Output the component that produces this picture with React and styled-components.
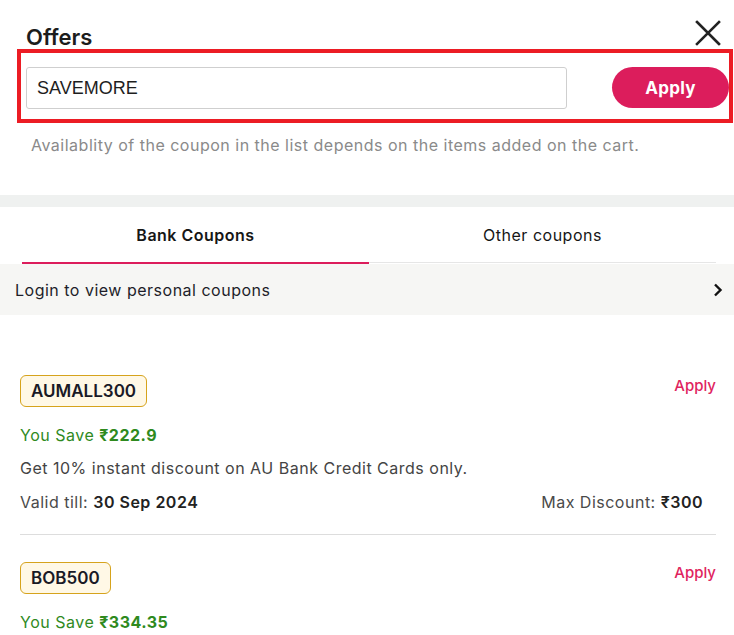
import styled, { createGlobalStyle } from 'styled-components';

const GlobalStyle = createGlobalStyle`
    body {
        margin: 0;
        background: #ffffff;
        font-family: Inter, "Noto Sans", sans-serif;
        color: #222222;
    }
`;

// only the part of each coupon that shows in the panel
const coupons = [
    {
        code: 'AUMALL300',
        save: '₹222.9',
        text: 'Get 10% instant discount on AU Bank Credit Cards only.',
        valid: '30 Sep 2024',
        max: '₹300',
    },
    {
        code: 'BOB500',
        save: '₹334.35',
    },
];

export default function App() {
    return (
        <>
            <GlobalStyle />
            <Panel>
                <Header>
                    <Title>Offers</Title>
                    <CloseButton aria-label="Close">
                        <svg width="26" height="26" viewBox="0 0 26 26">
                            <path d="M2 2 L24 24 M24 2 L2 24" stroke="#222" strokeWidth="2.6" strokeLinecap="square" fill="none" />
                        </svg>
                    </CloseButton>
                </Header>

                <CodeBox>
                    <CodeInput defaultValue="SAVEMORE" />
                    <ApplyButton>Apply</ApplyButton>
                </CodeBox>

                <Hint>Availablity of the coupon in the list depends on the items added on the cart.</Hint>

                <Band />

                <Tabs>
                    <Tab $active>Bank Coupons</Tab>
                    <Tab>Other coupons</Tab>
                </Tabs>

                <LoginRow>
                    <span>Login to view personal coupons</span>
                    <svg width="10" height="14" viewBox="0 0 10 14">
                        <path d="M2 1.5 L7.5 7 L2 12.5" stroke="#111" strokeWidth="2.4" fill="none" />
                    </svg>
                </LoginRow>

                <CouponList>
                    {coupons.map((c) => (
                        <Coupon key={c.code}>
                            <CouponTop>
                                <CodeBadge>{c.code}</CodeBadge>
                                <ApplyLink>Apply</ApplyLink>
                            </CouponTop>
                            <Save>You Save <strong>{c.save}</strong></Save>
                            {c.text && <Desc>{c.text}</Desc>}
                            {c.valid && (
                                <Meta>
                                    <span>Valid till: <b>{c.valid}</b></span>
                                    <span>Max Discount: <b>{c.max}</b></span>
                                </Meta>
                            )}
                        </Coupon>
                    ))}
                </CouponList>
            </Panel>
        </>
    );
}

const Panel = styled.div`
    width: 734px;
    letter-spacing: 0.5px;
`;

const Header = styled.div`
    display: flex;
    justify-content: space-between;
    align-items: flex-end;
    height: 49px;
    padding: 0 13px 0 26px;
`;

const Title = styled.h1`
    margin: 0 0 -1px;
    font-size: 22px;
    line-height: 26px;
    font-weight: 600;
    letter-spacing: 0;
    color: #1c1c1c;
`;

const CloseButton = styled.button`
    align-self: flex-start;
    margin-top: 20px;
    padding: 0;
    border: none;
    background: none;
    display: flex;
`;

const CodeBox = styled.div`
    box-sizing: border-box;
    display: flex;
    align-items: flex-start;
    justify-content: space-between;
    height: 74px;
    margin: 0 1px 0 17px;
    padding: 14px 0 0 5px;
    border: 4px solid #ec1c24;
`;

const CodeInput = styled.input`
    box-sizing: border-box;
    width: 541px;
    height: 42px;
    padding: 0 10px;
    border: 1px solid #cfcfcf;
    border-radius: 3px;
    font-family: "Liberation Sans", Arial, sans-serif;
    font-size: 18px;
    color: #1e1e1e;
    outline: none;
`;

const ApplyButton = styled.button`
    width: 117px;
    height: 41px;
    border: none;
    border-radius: 21px;
    background: #dc1d5c;
    color: #ffffff;
    font-family: Inter, "Noto Sans", sans-serif;
    font-size: 17px;
    font-weight: 700;
    letter-spacing: 0.3px;
`;

const Hint = styled.p`
    margin: 12px 0 0 31px;
    font-size: 16px;
    line-height: 20px;
    color: #8a8a8a;
`;

const Band = styled.div`
    height: 12px;
    margin-top: 40px;
    background: #eff1f0;
`;

const Tabs = styled.div`
    display: grid;
    grid-template-columns: 1fr 1fr;
    margin: 0 18px 0 22px;
`;

const Tab = styled.div`
    display: flex;
    align-items: center;
    justify-content: center;
    height: 55px;
    font-size: 16px;
    font-weight: ${(p) => (p.$active ? 600 : 400)};
    color: #161616;
    border-bottom: ${(p) => (p.$active ? '2px solid #dc1d5c' : '1px solid #e6e6e6')};
    margin-bottom: ${(p) => (p.$active ? '0' : '1px')};
`;

const LoginRow = styled.div`
    display: flex;
    align-items: center;
    justify-content: space-between;
    height: 51px;
    padding: 0 11px 0 15px;
    background: #f6f6f4;
    font-size: 16px;
    color: #1e1e2a;
`;

const CouponList = styled.div`
    padding: 60px 18px 0 20px;
`;

const Coupon = styled.div`
    padding-bottom: 22px;
    margin-bottom: 27px;
    border-bottom: 1px solid #dddddd;

    &:last-child {
        padding-bottom: 0;
        margin-bottom: 0;
        border-bottom: none;
    }
`;

const CouponTop = styled.div`
    display: flex;
    justify-content: space-between;
    align-items: flex-start;
`;

const CodeBadge = styled.span`
    box-sizing: border-box;
    height: 32px;
    display: inline-flex;
    align-items: center;
    padding: 0 10px;
    border: 1px solid #d6a31c;
    border-radius: 6px;
    background: #fff8e6;
    font-size: 17px;
    font-weight: 600;
    letter-spacing: 0;
    color: #1a1a26;
`;

const ApplyLink = styled.span`
    margin-top: 1px;
    font-size: 15px;
    font-weight: 500;
    letter-spacing: 0;
    color: #e0245e;
`;

const Save = styled.div`
    margin-top: 18px;
    font-size: 16px;
    line-height: 20px;
    color: #2f8a1e;

    strong {
        font-weight: 700;
    }
`;

const Desc = styled.div`
    margin-top: 13px;
    font-size: 16px;
    line-height: 20px;
    color: #444444;
`;

const Meta = styled.div`
    display: flex;
    justify-content: space-between;
    margin-top: 14px;
    padding-right: 13px;
    font-size: 16px;
    line-height: 20px;
    color: #4a4a4a;

    b {
        font-weight: 600;
        color: #222222;
    }
`;
